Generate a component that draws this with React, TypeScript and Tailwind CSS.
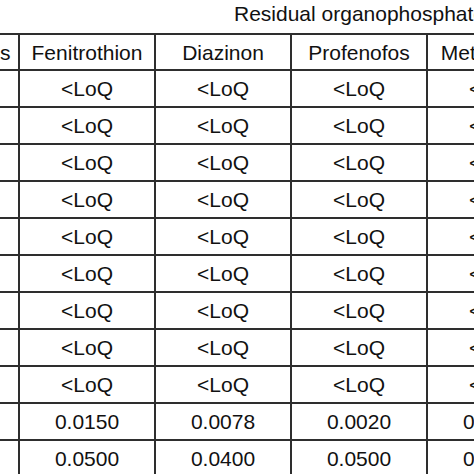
const columns = ["Ethoprophos", "Fenitrothion", "Diazinon", "Profenofos", "Methacrifos"]

const rows: string[][] = [
  ...Array.from({ length: 9 }, () => ["<LoQ", "<LoQ", "<LoQ", "<LoQ", "<LoQ"]),
  ["0.0100", "0.0150", "0.0078", "0.0020", "0.0050"],
  ["0.0500", "0.0500", "0.0400", "0.0500", "0.0500"],
]

export default function App() {
  return (
    <div
      className="w-[474px] h-[474px] overflow-hidden bg-white text-[#111111]"
      style={{ fontFamily: '"Liberation Sans", Arial, sans-serif' }}
    >
      <div className="h-[33px] pl-[234px] pt-[2px] whitespace-nowrap text-[21px] leading-[24px]">
        Residual organophosphate pesticides (mg/kg)
      </div>

      <div className="-ml-[118px] w-max grid grid-cols-[repeat(5,134px)] gap-[2px] p-[2px] bg-[#2e2e2e] text-[21px] leading-none">
        {columns.map((c) => (
          <div key={c} className="h-[34px] bg-white flex items-center justify-center whitespace-nowrap">
            {c}
          </div>
        ))}
        {rows.map((r, i) =>
          r.map((v, j) => (
            <div key={`${i}-${j}`} className="h-[35px] bg-white flex items-center justify-center">
              {v}
            </div>
          ))
        )}
      </div>
    </div>
  )
}
